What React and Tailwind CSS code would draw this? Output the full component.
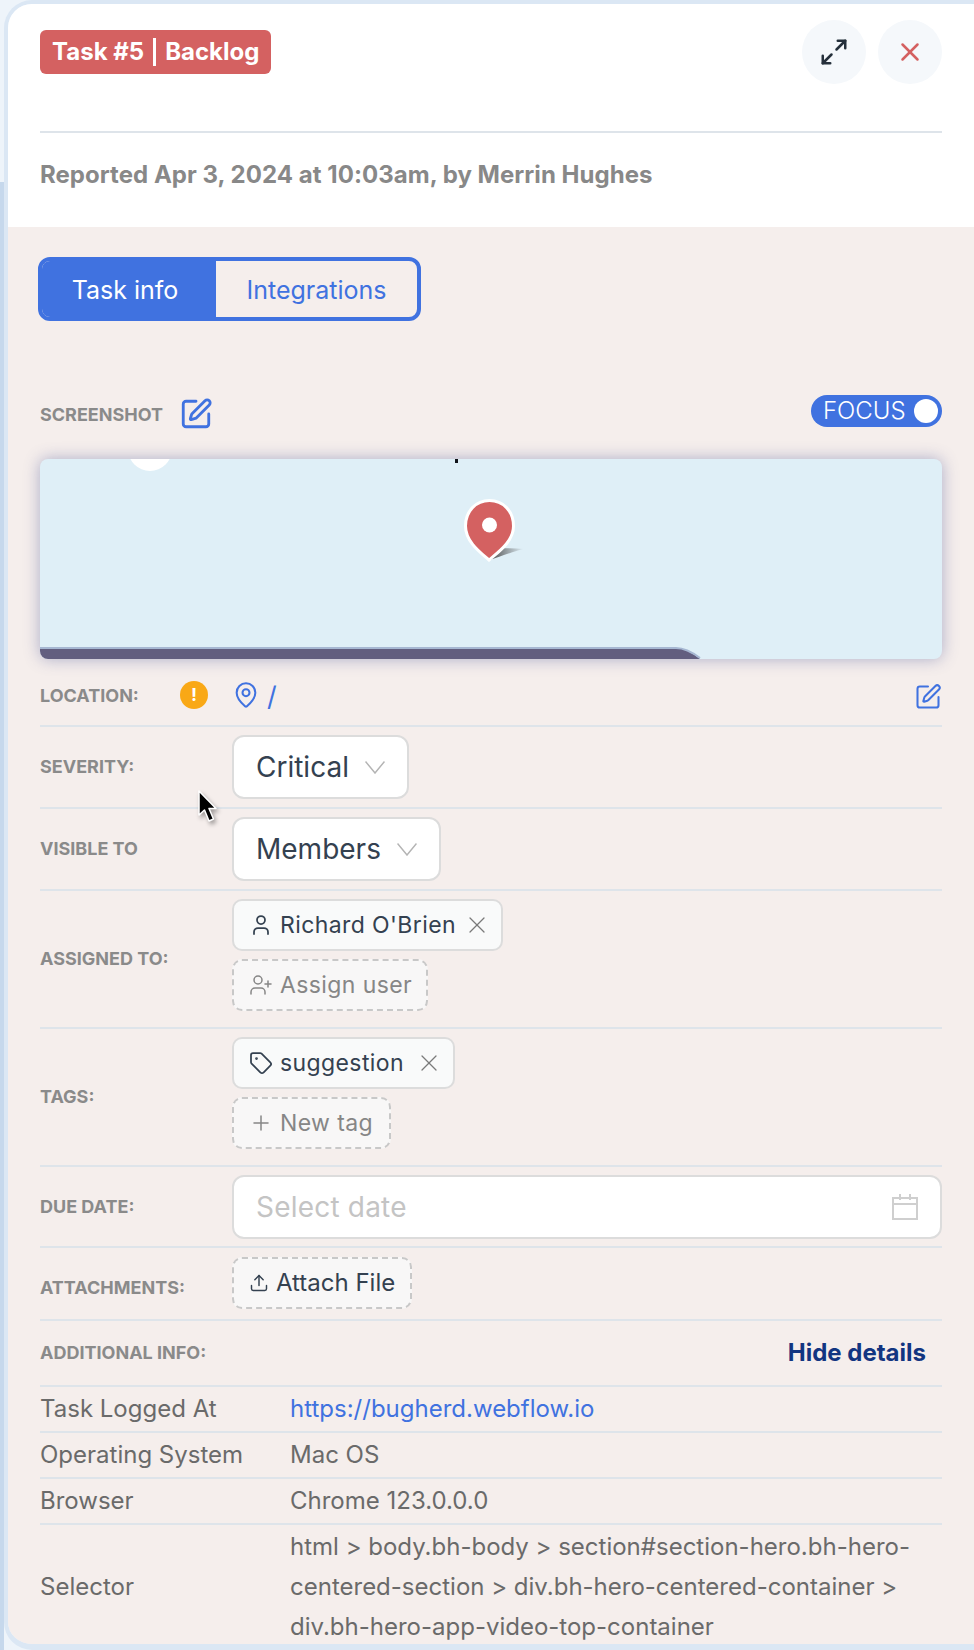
import { Maximize2, MapPin, Plus, SquarePen, Tag, Upload, User, UserPlus, X } from 'lucide-react';

const Label = ({ children, className = '' }) => (
  <span className={`block text-[18px] font-bold leading-none text-[#8a8a8a] ${className}`}>{children}</span>
);

const Row = ({ label, children, className = '', labelClass = '', bodyClass = '' }) => (
  <div className={`flex items-center border-b-2 border-[#dee4ea] ${className}`}>
    <div className="w-[192px] shrink-0">
      <Label className={labelClass}>{label}</Label>
    </div>
    <div className={`flex min-w-0 flex-1 flex-col items-start gap-2 ${bodyClass}`}>{children}</div>
  </div>
);

const Select = ({ value }) => (
  <div className="flex h-[64px] items-center gap-4 rounded-[12px] border-2 border-[#dcdcdc] bg-white pl-[22px] pr-[22px] text-[28px] text-[#344150]">
    {value}
    <svg width="20" height="13" viewBox="0 0 20 13" fill="none" stroke="#b4b4b4" strokeWidth="1.5">
      <path d="M0.5 0.5 L10 12 L19.5 0.5" />
    </svg>
  </div>
);

const Chip = ({ icon, label, className = '' }) => (
  <div className={`flex h-[52px] items-center rounded-[10px] border-2 border-[#dcdcdc] bg-[#f9fafa] pl-[15px] pr-[10px] text-[23px] text-[#344150] ${className}`}>
    {icon}
    <span className="ml-[7px] tracking-[0.4px]">{label}</span>
    <X size={28} strokeWidth={1.1} className="ml-auto text-[#7a7a7a]" />
  </div>
);

const AddChip = ({ icon, label, className = '' }) => (
  <div className={`flex h-[52px] items-center rounded-[10px] border-2 border-dashed border-[#c8c8c8] bg-[#f8f7f7] pl-[15px] text-[23px] text-[#868686] ${className}`}>
    {icon}
    <span className="ml-[7px] tracking-[0.4px]">{label}</span>
  </div>
);

const InfoRow = ({ label, children, className = '' }) => (
  <div className={`flex items-center border-b-2 border-[#dee4ea] text-[24px] text-[#6a6a6a] last:border-b-0 ${className}`}>
    <div className="w-[250px] shrink-0">{label}</div>
    <div className="min-w-0 flex-1">{children}</div>
  </div>
);

const Pin = () => (
  <svg width="62" height="64" viewBox="0 0 62 64" className="absolute left-[424px] top-[40px]">
    <defs>
      <linearGradient id="pinShadow" x1="0" y1="0" x2="1" y2="0">
        <stop offset="0" stopColor="#4a4a4a" />
        <stop offset="1" stopColor="#4a4a4a" stopOpacity="0" />
      </linearGradient>
    </defs>
    <path d="M25 61 C36 58 50 52 60 50 C50 49 38 49 30 50 Z" fill="url(#pinShadow)" />
    <path
      d="M25 61 C17 54 1.5 43 1.5 27 C1.5 12 12 1.5 25.5 1.5 C39 1.5 49.5 12 49.5 27 C49.5 43 33 54 25 61 Z"
      fill="#d46161"
      stroke="#fff"
      strokeWidth="3"
    />
    <circle cx="25.5" cy="26" r="7.5" fill="#fff" />
  </svg>
);

const Cursor = () => (
  <svg width="24" height="38" viewBox="0 0 24 38" className="absolute left-[194px] top-[787px] drop-shadow-[2px_3px_2px_rgba(0,0,0,0.35)]">
    <path d="M5 4 V28 L10.5 23 L15 34 L19.5 32 L15 21.5 L22 21.5 Z" fill="#000" stroke="#fff" strokeWidth="1.5" strokeLinejoin="round" />
  </svg>
);

export default function App() {
  return (
    <div className="relative h-[1650px] w-[974px] overflow-hidden bg-[#eef4fa] font-['Inter',sans-serif]">
      <div className="absolute bottom-0 left-0 top-[182px] w-1 bg-[#c6d8ec]" />
      <div className="relative ml-1 h-[1650px] overflow-hidden rounded-l-[28px] border-y-4 border-l-4 border-[#dbe7f4] border-b-[6px]">
        {/* Header */}
        <div className="h-[223px] bg-white pl-8 pr-8">
          <div className="flex h-[129px] items-start justify-between border-b-2 border-[#dee4ea] pt-[16px]">
            <div className="mt-[10px] flex h-[44px] w-[231px] items-center whitespace-nowrap rounded-[6px] bg-[#d46161] pl-3 text-[24px] font-bold text-white">
              Task #5
              <span className="mx-[9px] h-[28px] w-[3px] bg-white" />
              Backlog
            </div>
            <div className="flex gap-3">
              <div className="flex h-16 w-16 items-center justify-center rounded-full bg-[#f5f8fb] text-[#25303b]">
                <Maximize2 size={30} strokeWidth={2} />
              </div>
              <div className="flex h-16 w-16 items-center justify-center rounded-full bg-[#f5f8fb] text-[#d46161]">
                <X size={30} strokeWidth={2} />
              </div>
            </div>
          </div>
          <div className="mt-7 text-[24px] font-bold leading-[28px] tracking-[0.04px] text-[#888888]">
            Reported Apr 3, 2024 at 10:03am, by Merrin Hughes
          </div>
        </div>

        {/* Body */}
        <div className="h-[1417px] bg-[#f5eeec] pl-8 pr-8">
          <div className="pt-[30px]">
            <div className="-ml-0.5 inline-flex h-16 w-[383px] overflow-hidden rounded-[12px] border-4 border-[#4072e0] text-[25px]">
              <div className="flex w-[174px] items-center justify-center bg-[#4072e0] pr-2 pt-1 text-white">Task info</div>
              <div className="flex flex-1 items-center justify-center pt-1 text-[#4072e0]">Integrations</div>
            </div>
          </div>

          <div className="mt-[74px] flex h-8 items-center justify-between">
            <div className="flex items-center gap-4">
              <Label className="mt-2">SCREENSHOT</Label>
              <SquarePen size={34} strokeWidth={2} className="mt-[6px] text-[#4072e0]" />
            </div>
            <div className="flex h-8 w-[131px] items-center justify-between rounded-full bg-[#4072e0] pl-3 pr-1 text-[24px] font-light leading-none text-white">
              FOCUS
              <span className="h-6 w-6 rounded-full bg-white" />
            </div>
          </div>

          {/* Screenshot */}
          <div className="relative mt-8 h-[200px] w-[902px] overflow-hidden rounded-[8px] bg-[#dfeff7] shadow-[0_0_16px_rgba(70,80,150,0.42)]">
            <div className="absolute left-[88px] top-[-32px] h-11 w-11 rounded-full bg-white" />
            <div className="absolute left-[415px] top-0 h-1 w-[3px] bg-[#10131a]" />
            <Pin />
            <svg width="662" height="12" viewBox="0 0 662 12" className="absolute bottom-0 left-0">
              <path d="M0 1 H636 C645 1 652 6 660 12 H0 Z" fill="#625e7f" />
              <path d="M0 1 H636 C645 1 652 5 660 11" fill="none" stroke="#a6b7d2" strokeWidth="2" />
            </svg>
          </div>

          {/* Location */}
          <div className="flex h-[68px] items-center border-b-2 border-[#dee4ea] pt-2">
            <Label className="w-[140px]">LOCATION:</Label>
            <div className="-mt-0.5 flex h-7 w-7 items-center justify-center rounded-full bg-[#f9a816] text-[18px] font-bold leading-none text-white">!</div>
            <MapPin size={28} strokeWidth={1.75} className="-mt-0.5 ml-6 text-[#4072e0]" />
            <span className="ml-[7px] text-[27px] leading-none text-[#4072e0]">/</span>
            <SquarePen size={28} strokeWidth={1.75} className="ml-auto mt-0.5 text-[#4072e0]" />
          </div>

          <Row label="SEVERITY:" className="h-[82px]">
            <Select value="Critical" />
          </Row>
          <Row label="VISIBLE TO" className="h-[82px]">
            <Select value="Members" />
          </Row>
          <Row label="ASSIGNED TO:" className="h-[138px]" bodyClass="pb-2">
            <Chip icon={<User size={24} strokeWidth={1.75} />} label="Richard O'Brien" className="w-[271px]" />
            <AddChip icon={<UserPlus size={24} strokeWidth={1.5} />} label="Assign user" className="w-[196px]" />
          </Row>
          <Row label="TAGS:" className="h-[138px]" bodyClass="pb-2">
            <Chip icon={<Tag size={24} strokeWidth={1.75} />} label="suggestion" className="w-[223px]" />
            <AddChip icon={<Plus size={24} strokeWidth={1.5} />} label="New tag" className="w-[159px]" />
          </Row>
          <Row label="DUE DATE:" className="h-[81px]">
            <div className="flex h-16 w-full items-center justify-between rounded-[12px] border-2 border-[#dcdcdc] bg-white pl-[22px] pr-[22px] text-[28px] tracking-[0.2px] text-[#c4c4c4]">
              Select date
              <svg width="26" height="26" viewBox="0 0 26 26" fill="none" stroke="#cfcfcf" strokeWidth="2">
                <rect x="1" y="4" width="24" height="21" />
                <path d="M1 10 H25 M8 0 V6 M18 0 V6" />
              </svg>
            </div>
          </Row>
          <Row label="ATTACHMENTS:" className="h-[73px]" labelClass="mt-2" bodyClass="pb-0.5">
            <div className="flex h-[52px] items-center rounded-[10px] border-2 border-dashed border-[#c8c8c8] bg-[#f8f7f7] pl-[15px] pr-[15px] text-[24px] text-[#344150]">
              <Upload size={20} strokeWidth={1.75} />
              <span className="ml-[7px]">Attach File</span>
            </div>
          </Row>

          <div className="flex h-[66px] items-center justify-between border-b-2 border-[#dee4ea] pr-4">
            <Label>ADDITIONAL INFO:</Label>
            <span className="text-[24px] font-bold text-[#123581]">Hide details</span>
          </div>

          <InfoRow label="Task Logged At" className="h-[46px]">
            <span className="text-[#4072e0]">https://bugherd.webflow.io</span>
          </InfoRow>
          <InfoRow label="Operating System" className="h-[46px]">Mac OS</InfoRow>
          <InfoRow label="Browser" className="h-[46px]">Chrome 123.0.0.0</InfoRow>
          <InfoRow label="Selector" className="pb-1 pt-[2px]">
            <div className="leading-[40px]">
              html &gt; body.bh-body &gt; section#section-hero.bh-hero-centered-section &gt; div.bh-hero-centered-container &gt; div.bh-hero-app-video-top-container
            </div>
          </InfoRow>
        </div>
      </div>
      <Cursor />
    </div>
  );
}
